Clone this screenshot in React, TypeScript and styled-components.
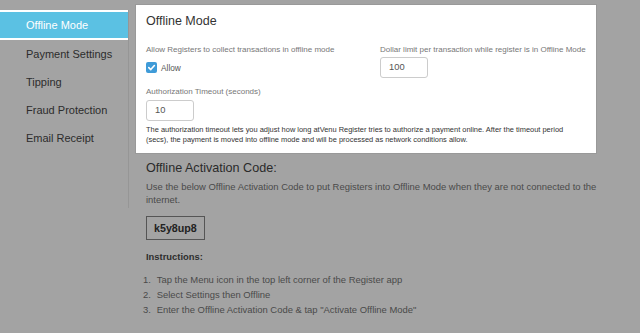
import React from 'react';
import styled, { createGlobalStyle } from 'styled-components';

const GlobalStyle = createGlobalStyle`
  html, body { margin: 0; padding: 0; background: #a3a3a3; }
  body {
    font-family: "Liberation Sans", Arial, Helvetica, sans-serif;
    width: 640px;
    height: 333px;
    overflow: hidden;
  }
  * { box-sizing: border-box; }
`;

const Page = styled.div`
  display: flex;
  align-items: flex-start;
  width: 640px;
  height: 333px;
`;

const Sidebar = styled.nav`
  flex: 0 0 129px;
  margin-top: 10px;
  height: 198px;
  border-right: 1px solid #969696;
  display: flex;
  flex-direction: column;
`;

const NavItem = styled.div<{ $active?: boolean }>`
  height: ${(p) => (p.$active ? 30 : 28)}px;
  line-height: ${(p) => (p.$active ? 26 : 28)}px;
  padding-left: 26px;
  font-size: 11px;
  white-space: nowrap;
  color: ${(p) => (p.$active ? '#ffffff' : '#2c2c2c')};
  background: ${(p) => (p.$active ? '#5bc1e3' : 'transparent')};
  border-top: ${(p) => (p.$active ? '2px solid #ffffff' : 'none')};
  border-bottom: ${(p) => (p.$active ? '2px solid #ffffff' : 'none')};
`;

const Main = styled.main`
  flex: 1;
  padding-left: 7px;
  padding-right: 24px;
`;

const Panel = styled.section`
  width: 460px;
  margin-top: 5px;
  background: #ffffff;
  padding: 8px 10px 8px 10px;
  box-shadow: 0 0 0 1px rgba(0, 0, 0, 0.06);
`;

const Title = styled.h2`
  margin: 0;
  font-size: 12.5px;
  line-height: 16px;
  font-weight: 400;
  color: #333333;
`;

const FieldGrid = styled.div`
  display: grid;
  grid-template-columns: 234px 1fr;
  margin-top: 16px;
`;

const Field = styled.div`
  display: flex;
  flex-direction: column;
  align-items: flex-start;
`;

const Label = styled.label<{ $gap?: number }>`
  font-size: 8px;
  line-height: 10px;
  color: #777777;
  white-space: nowrap;
  margin-bottom: ${(p) => p.$gap ?? 2}px;
`;

const CheckRow = styled.div`
  display: flex;
  align-items: center;
  gap: 4px;
  height: 21px;
`;

const CheckBox = styled.span`
  width: 11px;
  height: 11px;
  border-radius: 2px;
  background: #3f9bd8;
  display: flex;
  align-items: center;
  justify-content: center;
`;

const CheckText = styled.span`
  font-size: 8.3px;
  color: #555555;
`;

const Input = styled.div<{ $pad?: number }>`
  width: 48px;
  height: 21px;
  border: 1px solid #cccccc;
  border-radius: 3px;
  background: #ffffff;
  padding-left: ${(p) => p.$pad ?? 8}px;
  font-size: 9.33px;
  line-height: 19px;
  color: #555555;
`;

const TimeoutField = styled(Field)`
  margin-top: 9px;
`;

const Help = styled.p`
  margin: 4px 0 0 0;
  font-size: 7.45px;
  line-height: 10px;
  color: #333333;
`;

const Lower = styled.div`
  padding-left: 10px;
  width: 480px;
`;

const SubTitle = styled.h3`
  margin: 6.5px 0 0 0;
  font-size: 12.6px;
  line-height: 16px;
  font-weight: 400;
  color: #2a2a2a;
`;

const Body = styled.p`
  margin: 4.5px 0 0 0;
  font-size: 9.45px;
  line-height: 13.33px;
  color: #4a4a4a;
`;

const CodeBox = styled.div`
  display: inline-block;
  margin-top: 9px;
  padding: 4px 7px;
  border: 1px solid #555555;
  font-size: 10.7px;
  line-height: 14px;
  font-weight: 700;
  color: #222222;
`;

const Strong = styled.div`
  margin-top: 10px;
  font-size: 9.4px;
  line-height: 13.33px;
  font-weight: 700;
  color: #2e2e2e;
`;

const Steps = styled.ol`
  list-style: none;
  margin: 9px 0 0 -3px;
  padding: 0;
  counter-reset: step;
`;

const Step = styled.li`
  display: flex;
  counter-increment: step;
  font-size: 9.45px;
  line-height: 15px;
  color: #4a4a4a;
  white-space: nowrap;
  &::before {
    content: counter(step) ".";
    flex: 0 0 13.7px;
  }
`;

export default function App() {
  return (
    <>
      <GlobalStyle />
      <Page>
        <Sidebar>
          <NavItem $active>Offline Mode</NavItem>
          <NavItem>Payment Settings</NavItem>
          <NavItem>Tipping</NavItem>
          <NavItem>Fraud Protection</NavItem>
          <NavItem>Email Receipt</NavItem>
        </Sidebar>
        <Main>
          <Panel>
            <Title>Offline Mode</Title>
            <FieldGrid>
              <Field>
                <Label>Allow Registers to collect transactions in offline mode</Label>
                <CheckRow>
                  <CheckBox>
                    <svg width="9" height="9" viewBox="0 0 10 10">
                      <path d="M2 5.2 L4.2 7.3 L8.2 2.8" fill="none" stroke="#ffffff" strokeWidth="1.8" strokeLinecap="round" strokeLinejoin="round" />
                    </svg>
                  </CheckBox>
                  <CheckText>Allow</CheckText>
                </CheckRow>
              </Field>
              <Field>
                <Label>Dollar limit per transaction while register is in Offline Mode</Label>
                <Input $pad={8}>100</Input>
              </Field>
              <TimeoutField>
                <Label $gap={3}>Authorization Timeout (seconds)</Label>
                <Input>10</Input>
              </TimeoutField>
            </FieldGrid>
            <Help>
              The authorization timeout lets you adjust how long atVenu Register tries to authorize a payment online. After the timeout period (secs), the payment is moved into offline mode and will be processed as network conditions allow.
            </Help>
          </Panel>
          <Lower>
            <SubTitle>Offline Activation Code:</SubTitle>
            <Body>
              Use the below Offline Activation Code to put Registers into Offline Mode when they are not connected to the internet.
            </Body>
            <CodeBox>k5y8up8</CodeBox>
            <Strong>Instructions:</Strong>
            <Steps>
              <Step>Tap the Menu icon in the top left corner of the Register app</Step>
              <Step>Select Settings then Offline</Step>
              <Step>Enter the Offline Activation Code &amp; tap "Activate Offline Mode"</Step>
            </Steps>
          </Lower>
        </Main>
      </Page>
    </>
  );
}
